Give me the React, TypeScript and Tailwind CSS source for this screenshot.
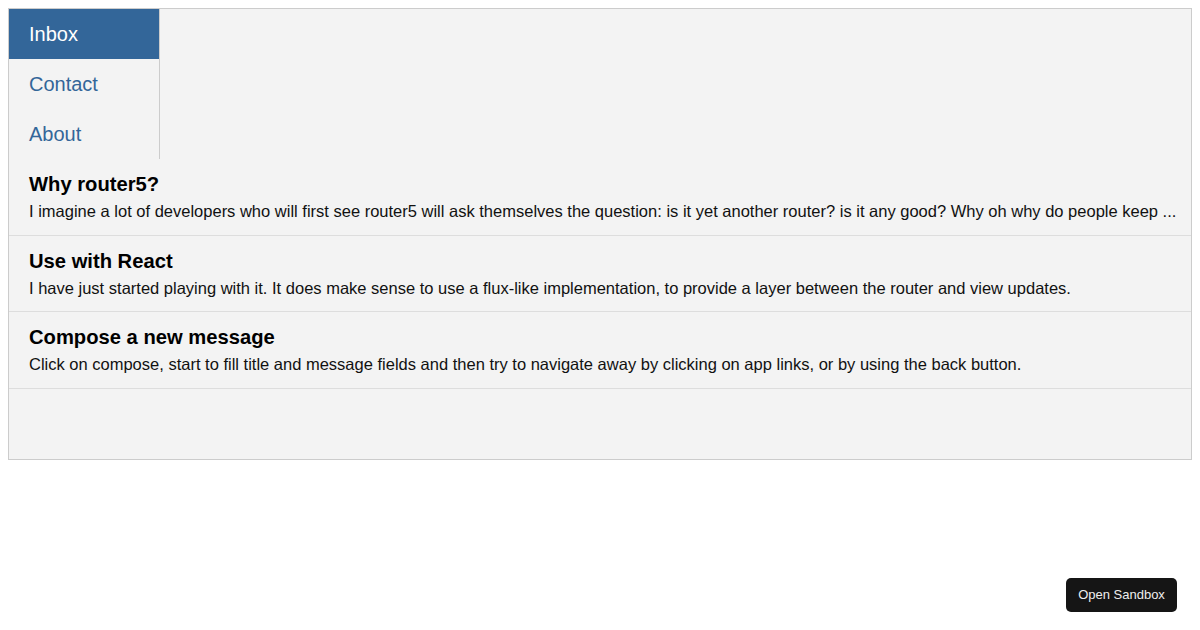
const messages = [
  {
    title: "Why router5?",
    body: "I imagine a lot of developers who will first see router5 will ask themselves the question: is it yet another router? is it any good? Why oh why do people keep ...",
  },
  {
    title: "Use with React",
    body: "I have just started playing with it. It does make sense to use a flux-like implementation, to provide a layer between the router and view updates.",
  },
  {
    title: "Compose a new message",
    body: "Click on compose, start to fill title and message fields and then try to navigate away by clicking on app links, or by using the back button.",
  },
]

const links = ["Inbox", "Contact", "About"]

export default function App() {
  return (
    <div className="min-h-[630px] bg-white p-2 font-['Liberation_Sans',Arial,sans-serif]">
      <div className="border border-[#cccccc] bg-[#f3f3f3] pb-[70px]">
        <nav className="flex w-[151px] flex-col border-r border-[#cccccc]">
          {links.map((l, i) => (
            <a
              key={l}
              className={
                i === 0
                  ? "flex h-[50px] items-center bg-[#336699] pl-5 text-[20px] text-white"
                  : "flex h-[50px] items-center pl-5 text-[20px] text-[#336699]"
              }
            >
              {l}
            </a>
          ))}
        </nav>

        <ul>
          {messages.map((m) => (
            <li key={m.title} className="border-b border-[#dddddd] pl-5 pr-2 pt-[13px] pb-[11.5px]">
              <h4 className="text-[20.2px] leading-[24px] font-bold text-black">{m.title}</h4>
              <p className="mt-[3px] whitespace-nowrap text-[16.5px] leading-[24px] text-[#111111]">{m.body}</p>
            </li>
          ))}
        </ul>
      </div>

      <div className="flex justify-end pt-[118px] pr-[15px]">
        <button className="h-[34px] w-[111px] rounded-[5px] bg-[#151515] text-[13px] text-[#eeeeee]">
          Open Sandbox
        </button>
      </div>
    </div>
  )
}
